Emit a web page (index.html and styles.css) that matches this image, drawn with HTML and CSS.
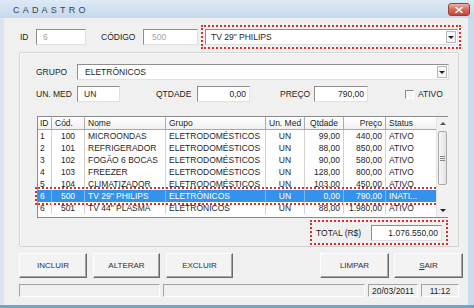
FILE: index.html
```html
<!DOCTYPE html>
<html lang="pt-BR">
<head>
<meta charset="utf-8">
<title>Cadastro</title>
<link rel="stylesheet" href="styles.css">
</head>
<body>
<div class="window">
  <div class="titlebar">
    <span class="title">CADASTRO</span>
    <span class="close"><svg width="8" height="6" viewBox="0 0 8 6"><path d="M1 0.5 L7 5.5 M7 0.5 L1 5.5" stroke="#fff" stroke-width="1.6" stroke-linecap="round"/></svg></span>
  </div>
  <div class="client">
    <div class="row1">
      <span class="lbl lbl-id">ID</span>
      <span class="field f-id dis">6</span>
      <span class="lbl lbl-cod">CÓDIGO</span>
      <span class="field f-cod dis">500</span>
      <div class="mark mark-combo">
        <div class="combo"><span class="combo-text">TV 29" PHILIPS</span><span class="drop"><span class="tri-down"></span></span></div>
      </div>
    </div>

    <div class="frame">
      <div class="frow">
        <span class="lbl lbl-grupo">GRUPO</span>
        <div class="combo combo-grupo"><span class="combo-text">ELETRÔNICOS</span><span class="drop"><span class="tri-down"></span></span></div>
      </div>
      <div class="frow frow2">
        <span class="lbl lbl-un">UN. MED</span>
        <span class="field f-un">UN</span>
        <span class="lbl lbl-qt">QTDADE</span>
        <span class="field f-qt num">0,00</span>
        <span class="lbl lbl-pr">PREÇO</span>
        <span class="field f-pr num">790,00</span>
        <span class="check"></span>
        <span class="lbl lbl-at">ATIVO</span>
      </div>

      <div class="grid">
        <div class="gbody">
          <div class="grow ghead">
            <span class="c w-id">ID</span><span class="c w-cod">Cód.</span><span class="c w-nome">Nome</span><span class="c w-grupo">Grupo</span><span class="c w-un">Un. Med</span><span class="c w-qt ctr">Qtdade</span><span class="c w-pr rt">Preço</span><span class="c w-st">Status</span>
          </div>
          <div class="grow">
            <span class="c w-id">1</span><span class="c w-cod ctr">100</span><span class="c w-nome">MICROONDAS</span><span class="c w-grupo">ELETRODOMÉSTICOS</span><span class="c w-un ctr">UN</span><span class="c w-qt rt">99,00</span><span class="c w-pr rt">440,00</span><span class="c w-st">ATIVO</span>
          </div>
          <div class="grow">
            <span class="c w-id">2</span><span class="c w-cod ctr">101</span><span class="c w-nome">REFRIGERADOR</span><span class="c w-grupo">ELETRODOMÉSTICOS</span><span class="c w-un ctr">UN</span><span class="c w-qt rt">88,00</span><span class="c w-pr rt">850,00</span><span class="c w-st">ATIVO</span>
          </div>
          <div class="grow">
            <span class="c w-id">3</span><span class="c w-cod ctr">102</span><span class="c w-nome">FOGÃO 6 BOCAS</span><span class="c w-grupo">ELETRODOMÉSTICOS</span><span class="c w-un ctr">UN</span><span class="c w-qt rt">90,00</span><span class="c w-pr rt">580,00</span><span class="c w-st">ATIVO</span>
          </div>
          <div class="grow">
            <span class="c w-id">4</span><span class="c w-cod ctr">103</span><span class="c w-nome">FREEZER</span><span class="c w-grupo">ELETRODOMÉSTICOS</span><span class="c w-un ctr">UN</span><span class="c w-qt rt">128,00</span><span class="c w-pr rt">800,00</span><span class="c w-st">ATIVO</span>
          </div>
          <div class="grow">
            <span class="c w-id">5</span><span class="c w-cod ctr">104</span><span class="c w-nome">CLIMATIZADOR</span><span class="c w-grupo">ELETRODOMÉSTICOS</span><span class="c w-un ctr">UN</span><span class="c w-qt rt">103,00</span><span class="c w-pr rt">450,00</span><span class="c w-st">ATIVO</span>
          </div>
          <div class="grow sel">
            <span class="c w-id">6</span><span class="c w-cod ctr">500</span><span class="c w-nome">TV 29" PHILIPS</span><span class="c w-grupo">ELETRÔNICOS</span><span class="c w-un ctr">UN</span><span class="c w-qt rt">0,00</span><span class="c w-pr rt">790,00</span><span class="c w-st">INATI...</span>
          </div>
          <div class="grow">
            <span class="c w-id">6</span><span class="c w-cod ctr">501</span><span class="c w-nome">TV 44" PLASMA</span><span class="c w-grupo">ELETRÔNICOS</span><span class="c w-un ctr">UN</span><span class="c w-qt rt">88,00</span><span class="c w-pr rt">1.980,00</span><span class="c w-st">ATIVO</span>
          </div>
        </div>
        <div class="sbar">
          <span class="sb-btn"><span class="tri-up"></span></span>
          <span class="sb-track"><span class="thumb"><span class="grip"></span></span></span>
          <span class="sb-btn"><span class="tri-down"></span></span>
        </div>
      </div>

      <div class="total-row">
        <div class="mark mark-total">
          <span class="lbl">TOTAL (R$)</span>
          <span class="field f-total num">1.076.550,00</span>
        </div>
      </div>
    </div>

    <div class="buttons">
      <span class="btn b-incluir">INCLUIR</span>
      <span class="btn b-alterar">ALTERAR</span>
      <span class="btn b-excluir">EXCLUIR</span>
      <span class="btn b-limpar">LIMPAR</span>
      <span class="btn b-sair"><u>S</u>AIR</span>
    </div>

    <div class="status">
      <span class="panel p1"></span>
      <span class="panel p2"></span>
      <span class="panel p3">20/03/2011</span>
      <span class="panel p4">11:12</span>
    </div>
  </div>
</div>
</body>
</html>
```

FILE: styles.css
```css
* { box-sizing: border-box; margin: 0; padding: 0; }
html, body { width: 474px; height: 308px; overflow: hidden; }
body {
  font-family: "Liberation Sans", Arial, sans-serif;
  font-size: 8.5px;
  color: #1e1e1e;
  background: #cddff0;
}
.window {
  width: 474px;
  height: 308px;
  display: flex;
  flex-direction: column;
  background: linear-gradient(90deg, #dae5f0 0, #dae5f0 4px, #c9dcef 4px);
  border-bottom: 3px solid #6aa8cb;
}
.titlebar {
  height: 18px;
  flex: none;
  display: flex;
  align-items: flex-start;
  justify-content: space-between;
  padding: 0 4px 0 13px;
  background: linear-gradient(#dde9f5, #c5d8ec);
}
.title {
  font-size: 9px;
  letter-spacing: 3.2px;
  color: #34465a;
  margin-top: 5px;
}
.close {
  width: 22px;
  height: 13px;
  margin-top: 3px;
  border: 1px solid #9b4238;
  border-radius: 3px;
  background: linear-gradient(#ecb3a8, #d66b5e 50%, #c4473b);
  display: flex;
  align-items: center;
  justify-content: center;
}
.client {
  flex: 1;
  margin: 0 6px 0 4px;
  background: #f0f0f0;
  padding: 7px 0 8px 15px;
  display: flex;
  flex-direction: column;
}

.lbl { white-space: nowrap; flex: none; }
.field {
  flex: none;
  height: 16px;
  background: #fff;
  border: 1px solid;
  border-color: #8e8e8e #e0e0e0 #e0e0e0 #8e8e8e;
  display: flex;
  align-items: center;
  padding: 0 6px;
  white-space: nowrap;
}
.dis { color: #a3a3a3; }
.num { justify-content: flex-end; padding-right: 3px; }

.mark { border: 2px dotted #d6322c; }

.combo {
  height: 16px;
  background: #fff;
  border: 1px solid;
  border-color: #8e8e8e #e0e0e0 #e0e0e0 #8e8e8e;
  display: flex;
  align-items: center;
  padding-left: 5px;
}
.combo-text { flex: 1; white-space: nowrap; }
.drop {
  width: 10px;
  height: 12px;
  margin-right: 1px;
  border: 1px solid #b8b8b8;
  background: #f6f6f6;
  display: flex;
  align-items: center;
  justify-content: center;
}
.tri-down {
  width: 0; height: 0;
  border-left: 3px solid transparent;
  border-right: 3px solid transparent;
  border-top: 3px solid #222;
}
.tri-up {
  width: 0; height: 0;
  border-left: 3px solid transparent;
  border-right: 3px solid transparent;
  border-bottom: 3px solid #555;
}

/* row 1 */
.row1 { height: 24px; display: flex; align-items: center; flex: none; }
.lbl-id { margin-left: 1px; width: 16px; }
.f-id { width: 50px; }
.lbl-cod { margin-left: 15px; width: 42px; }
.f-cod { width: 55px; padding-left: 8px; }
.mark-combo { margin-left: 3px; width: 260px; height: 24px; padding: 2px 1px 2px 2px; }

/* frame */
.frame {
  flex: none;
  width: 440px;
  height: 195px;
  margin-top: 3px;
  border: 1px solid #d2d2d2;
  border-radius: 2px;
  box-shadow: inset 1px 1px 0 #fbfbfb;
  padding: 11px 10px 1px 16px;
  display: flex;
  flex-direction: column;
}
.frow { display: flex; align-items: center; height: 16px; flex: none; }
.frow2 { margin-top: 6px; }
.lbl-grupo { width: 41px; }
.combo-grupo { flex: 1; margin-right: -1px; padding-left: 7px; }
.lbl-un { width: 41px; }
.f-un { width: 43px; }
.lbl-qt { margin-left: 36px; width: 41px; }
.f-qt { width: 53px; }
.lbl-pr { margin-left: 30px; width: 34px; }
.f-pr { width: 54px; }
.check {
  flex: none;
  margin-left: 37px;
  width: 9px;
  height: 9px;
  border: 1px solid;
  border-color: #8a8a8a #fff #fff #8a8a8a;
  background: #f5f5f5;
}
.lbl-at { margin-left: 4px; }

/* grid */
.grid {
  flex: none;
  margin-top: 14px;
  margin-left: 1px;
  height: 102px;
  border: 1px solid #8b8b8b;
  background: #fff;
  display: flex;
}
.gbody { flex: 1; display: flex; flex-direction: column; }
.grow { display: flex; height: 12px; flex: none; }
.ghead {
  height: 13px;
  background: linear-gradient(#ffffff, #f0f0f0);
  border-bottom: 1px solid #a8a8a8;
}
.c {
  flex: none;
  height: 100%;
  padding: 0 3px;
  display: flex;
  align-items: center;
  white-space: nowrap;
  overflow: hidden;
  border-right: 1px solid #d2d2d2;
}
.ghead .c { border-right-color: #acacac; }
.ctr { justify-content: center; }
.rt { justify-content: flex-end; }
.w-id { width: 14px; padding: 0 2px; }
.w-cod { width: 33px; }
.w-nome { width: 81px; }
.w-grupo { width: 100px; }
.w-un { width: 39px; }
.w-qt { width: 39px; }
.w-pr { width: 42px; }
.w-st { width: 50px; border-right: none; }
.sel {
  background: #3592ec;
  color: #fff;
  outline: 2px dotted #d6322c;
  outline-offset: 1px;
}
.sel .c { border-right-color: #7db8f2; }

.sbar {
  flex: none;
  width: 12px;
  display: flex;
  flex-direction: column;
  background: #f1f1f1;
  border-left: 1px solid #e2e2e2;
}
.sb-btn { height: 13px; display: flex; align-items: center; justify-content: center; flex: none; }
.sb-track { flex: 1; padding-top: 1px; }
.thumb {
  display: flex;
  align-items: center;
  justify-content: center;
  height: 54px;
  margin: 0 1px;
  border: 1px solid #a9a9a9;
  border-radius: 2px;
  background: linear-gradient(90deg, #f7f7f7, #e2e2e2);
}
.grip {
  width: 5px;
  height: 5px;
  background: repeating-linear-gradient(#8a8a8a 0 1px, transparent 1px 2px);
}

/* total */
.total-row { display: flex; justify-content: flex-end; margin-top: 2px; flex: none; }
.mark-total {
  width: 138px;
  height: 25px;
  display: flex;
  align-items: center;
  padding: 0 4px;
}
.f-total { width: 71px; margin-left: auto; }

/* buttons */
.buttons { display: flex; height: 25px; margin-top: 6px; flex: none; }
.btn {
  flex: none;
  height: 25px;
  background: #f3f3f3;
  border: 1px solid;
  border-color: #fdfdfd #6b6b6b #6b6b6b #fdfdfd;
  box-shadow: inset -1px -1px 0 #a3a3a3;
  display: flex;
  align-items: center;
  justify-content: center;
  font-size: 8px;
  color: #303030;
}
.b-incluir { width: 68px; }
.b-alterar { width: 67px; margin-left: 6px; }
.b-excluir { width: 67px; margin-left: 6px; }
.b-limpar { width: 69px; margin-left: 87px; }
.b-sair { width: 69px; margin-left: 5px; }

/* status bar */
.status { display: flex; height: 13px; margin-top: 6px; flex: none; }
.panel {
  flex: none;
  height: 13px;
  border: 1px solid;
  border-color: #a4a4a4 #fff #fff #a4a4a4;
  display: flex;
  align-items: center;
  white-space: nowrap;
}
.p1 { width: 141px; }
.p2 { width: 202px; margin-left: 3px; }
.p3 { width: 50px; margin-left: 3px; padding-left: 3px; }
.p4 { width: 38px; margin-left: 3px; justify-content: center; }
```
